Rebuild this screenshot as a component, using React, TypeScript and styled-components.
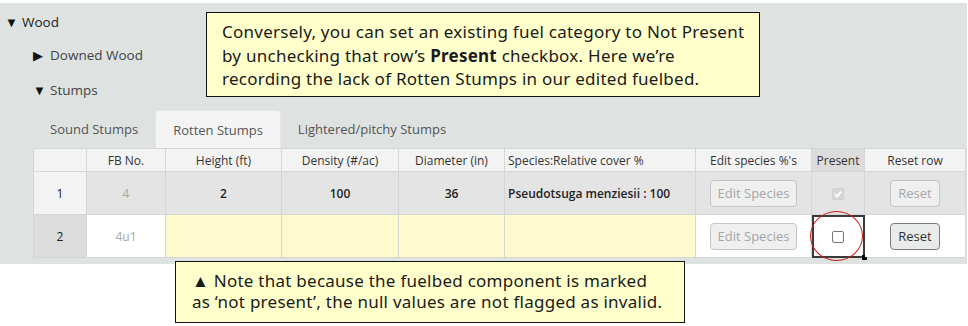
import React from "react";
import styled, { createGlobalStyle } from "styled-components";

const GlobalStyle = createGlobalStyle`
  html, body {
    margin: 0;
    padding: 0;
    background: #ffffff;
  }
  body {
    font-family: "Open Sans", "Liberation Sans", sans-serif;
  }
`;

const Page = styled.div`
  width: 968px;
  height: 326px;
  padding-top: 3px;
  box-sizing: border-box;
  position: relative;
  overflow: hidden;
`;

const Panel = styled.div`
  width: 967px;
  height: 261px;
  background: #dee2e1;
  box-sizing: border-box;
  padding: 4px 2px 0 0;
  display: flex;
  flex-direction: column;
`;

const TreeRow = styled.div<{ $indent: number; $height: number }>`
  display: flex;
  align-items: center;
  height: ${(p) => p.$height}px;
  padding-left: ${(p) => p.$indent}px;
  font-size: 13.5px;
  color: ${(p) => (p.$indent > 10 ? "#444" : "#222")};
`;

const Arrow = styled.span`
  display: inline-block;
  width: 17px;
  font-size: 13px;
  color: #111;
`;

const Tabs = styled.div`
  display: flex;
  align-items: flex-end;
  height: 39px;
  padding-left: 33px;
  margin-top: 2px;
`;

const Tab = styled.div<{ $active?: boolean }>`
  height: 38px;
  display: flex;
  align-items: center;
  padding: 0 17px;
  font-size: 13px;
  color: #555;
  background: ${(p) => (p.$active ? "#f4f4f4" : "transparent")};
  border-radius: 4px 4px 0 0;
  box-sizing: border-box;
  ${(p) => (p.$active ? "border: 1px solid #e4e6e6; border-bottom: none;" : "")}
`;

const Grid = styled.table`
  margin-left: 33px;
  border-collapse: collapse;
  table-layout: fixed;
  width: 932px;
  font-size: 12px;
  color: #222;
  background: #ffffff;
  border: 1px solid #d8d8d8;
`;

const Head = styled.th<{ $hl?: boolean; $left?: boolean }>`
  height: 22px;
  font-weight: 400;
  background: ${(p) => (p.$hl ? "#dcdcdc" : "#f3f3f3")};
  border: 1px solid #d6d6d6;
  text-align: ${(p) => (p.$left ? "left" : "center")};
  padding: 0 3px;
  white-space: nowrap;
  color: #333;
`;

type Tone = "row" | "rownum" | "sel" | "white" | "yellow";

const tones: Record<Tone, string> = {
  row: "#e4e4e4",
  rownum: "#f3f3f3",
  sel: "#dcdcdc",
  white: "#ffffff",
  yellow: "#fffacd",
};

const Cell = styled.td<{ $tone: Tone; $muted?: boolean; $bold?: boolean; $left?: boolean }>`
  height: 42px;
  background: ${(p) => tones[p.$tone]};
  border: 1px solid #d6d6d6;
  text-align: ${(p) => (p.$left ? "left" : "center")};
  padding: 0 3px;
  color: ${(p) => (p.$muted ? "#a8a8a8" : "#222")};
  font-weight: ${(p) => (p.$bold ? 600 : 400)};
  white-space: nowrap;
  position: relative;
`;

const SelectedCell = styled(Cell)`
  outline: 2px solid #3a3a3a;
  outline-offset: -2px;
`;

const Handle = styled.span`
  position: absolute;
  right: -3px;
  bottom: -3px;
  width: 5px;
  height: 5px;
  background: #000;
`;

const Button = styled.button<{ $disabled?: boolean }>`
  font-family: "Open Sans", "Liberation Sans", sans-serif;
  font-size: 13px;
  height: 27px;
  padding: 0 7px;
  border-radius: 4px;
  border: 1px solid ${(p) => (p.$disabled ? "#c4c4c4" : "#7c7c7c")};
  background: ${(p) => (p.$disabled ? "#efefef" : "#e9ebeb")};
  color: ${(p) => (p.$disabled ? "#a6a6a6" : "#333")};
`;

const Check = styled.span<{ $checked?: boolean }>`
  display: inline-block;
  width: 12px;
  height: 12px;
  border-radius: 2px;
  border: 1px solid ${(p) => (p.$checked ? "#d0d0d0" : "#777")};
  background: ${(p) => (p.$checked ? "#d6d6d6" : "#fff")};
  vertical-align: middle;
  position: relative;
  box-sizing: border-box;
`;

const Callout = styled.div<{ $top: number; $left: number; $width: number; $height: number }>`
  position: absolute;
  top: ${(p) => p.$top}px;
  left: ${(p) => p.$left}px;
  width: ${(p) => p.$width}px;
  height: ${(p) => p.$height}px;
  box-sizing: border-box;
  background: #ffffcc;
  border: 1px solid #111;
  font-family: "Noto Sans", Lato, sans-serif;
  color: #1a1a1a;
  white-space: nowrap;
`;

const CalloutText = styled.p<{ $size: number; $line: number; $pad: string }>`
  margin: 0;
  padding: ${(p) => p.$pad};
  font-size: ${(p) => p.$size}px;
  line-height: ${(p) => p.$line}px;
  letter-spacing: 0.25px;
  b {
    font-weight: 700;
  }
`;

const Ring = styled.div`
  position: absolute;
  left: 810px;
  top: 211px;
  width: 53px;
  height: 50px;
  border: 1px solid #d01818;
  border-radius: 50%;
  box-sizing: border-box;
  pointer-events: none;
`;

const widths = [53, 79, 116, 117, 106, 191, 116, 53, 101];

function CheckMark() {
  return (
    <svg width="10" height="10" viewBox="0 0 10 10" style={{ position: "absolute", left: 0, top: 0 }}>
      <path d="M2 5.2 L4.2 7.4 L8.2 2.6" fill="none" stroke="#fff" strokeWidth="1.8" />
    </svg>
  );
}

export default function App() {
  return (
    <>
      <GlobalStyle />
      <Page>
        <Panel>
          <TreeRow $indent={5} $height={30}>
            <Arrow>▼</Arrow>Wood
          </TreeRow>
          <TreeRow $indent={33} $height={36}>
            <Arrow>▶</Arrow>Downed Wood
          </TreeRow>
          <TreeRow $indent={33} $height={34}>
            <Arrow>▼</Arrow>Stumps
          </TreeRow>
          <Tabs>
            <Tab>Sound Stumps</Tab>
            <Tab $active>Rotten Stumps</Tab>
            <Tab>Lightered/pitchy Stumps</Tab>
          </Tabs>
          <Grid>
            <colgroup>
              {widths.map((w, i) => (
                <col key={i} style={{ width: w }} />
              ))}
            </colgroup>
            <thead>
              <tr>
                <Head />
                <Head>FB No.</Head>
                <Head>Height (ft)</Head>
                <Head>Density (#/ac)</Head>
                <Head>Diameter (in)</Head>
                <Head $left>Species:Relative cover %</Head>
                <Head>Edit species %'s</Head>
                <Head $hl>Present</Head>
                <Head>Reset row</Head>
              </tr>
            </thead>
            <tbody>
              <tr>
                <Cell $tone="rownum">1</Cell>
                <Cell $tone="row" $muted>4</Cell>
                <Cell $tone="row" $bold>2</Cell>
                <Cell $tone="row" $bold>100</Cell>
                <Cell $tone="row" $bold>36</Cell>
                <Cell $tone="row" $bold $left>
                  Pseudotsuga menziesii : 100
                </Cell>
                <Cell $tone="row">
                  <Button $disabled>Edit Species</Button>
                </Cell>
                <Cell $tone="row">
                  <Check $checked>
                    <CheckMark />
                  </Check>
                </Cell>
                <Cell $tone="row">
                  <Button $disabled>Reset</Button>
                </Cell>
              </tr>
              <tr>
                <Cell $tone="sel">2</Cell>
                <Cell $tone="white" $muted>4u1</Cell>
                <Cell $tone="yellow" />
                <Cell $tone="yellow" />
                <Cell $tone="yellow" />
                <Cell $tone="yellow" />
                <Cell $tone="white">
                  <Button $disabled>Edit Species</Button>
                </Cell>
                <SelectedCell $tone="white">
                  <Check />
                  <Handle />
                </SelectedCell>
                <Cell $tone="white">
                  <Button>Reset</Button>
                </Cell>
              </tr>
            </tbody>
          </Grid>
        </Panel>
        <Callout $top={12} $left={206} $width={554} $height={85}>
          <CalloutText $size={17} $line={23.5} $pad="7px 10px 0 15px">
            Conversely, you can set an existing fuel category to Not Present
            <br />
            by unchecking that row’s <b>Present</b> checkbox. Here we’re
            <br />
            recording the lack of Rotten Stumps in our edited fuelbed.
          </CalloutText>
        </Callout>
        <Callout $top={261} $left={175} $width={510} $height={62}>
          <CalloutText $size={17} $line={21} $pad="8px 8px 0 16px">
            ▲ Note that because the fuelbed component is marked
            <br />
            as ‘not present’, the null values are not flagged as invalid.
          </CalloutText>
        </Callout>
        <Ring />
      </Page>
    </>
  );
}
